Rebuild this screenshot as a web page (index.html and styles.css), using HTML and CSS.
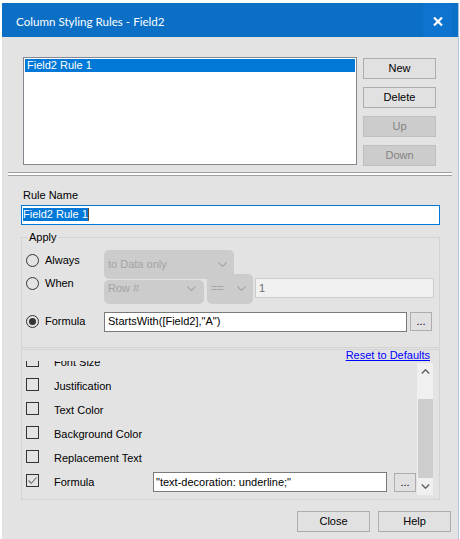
FILE: index.html
```html
<!DOCTYPE html>
<html>
<head>
<meta charset="utf-8">
<title>Column Styling Rules - Field2</title>
<link rel="stylesheet" href="styles.css">
</head>
<body>
<div class="window">
  <div class="titlebar">
    <span class="title">Column Styling Rules - Field2</span>
    <span class="close"><svg width="10" height="9" viewBox="0 0 10 9"><path d="M1 0.5 L9 8.5 M9 0.5 L1 8.5" stroke="#fff" stroke-width="2.2" fill="none"/></svg></span>
  </div>
  <div class="client">
    <div class="top">
      <div class="listbox"><div class="item selected">Field2 Rule 1</div></div>
      <div class="btncol">
        <button class="btn">New</button>
        <button class="btn">Delete</button>
        <button class="btn disabled">Up</button>
        <button class="btn disabled">Down</button>
      </div>
    </div>
    <div class="sep"></div>
    <div class="rn-label">Rule Name</div>
    <div class="rn-box"><span class="sel">Field2 Rule 1</span><span class="caret"></span></div>
    <div class="group">
      <div class="group-title">Apply</div>
      <div class="arow arow1">
        <div class="opt"><span class="radio"></span><span class="optlbl">Always</span></div>
        <div class="combo c-data"><span>to Data only</span><svg class="chev" width="9" height="5" viewBox="0 0 9 5"><path d="M0.5 0.5 L4.5 4.5 L8.5 0.5" stroke="#a8a8a8" stroke-width="1.2" fill="none"/></svg></div>
      </div>
      <div class="arow arow2">
        <div class="opt"><span class="radio"></span><span class="optlbl">When</span></div>
        <div class="combo c-row"><span>Row #</span><svg class="chev" width="9" height="5" viewBox="0 0 9 5"><path d="M0.5 0.5 L4.5 4.5 L8.5 0.5" stroke="#a8a8a8" stroke-width="1.2" fill="none"/></svg></div>
        <div class="combo c-op"><span>==</span><svg class="chev" width="9" height="5" viewBox="0 0 9 5"><path d="M0.5 0.5 L4.5 4.5 L8.5 0.5" stroke="#a8a8a8" stroke-width="1.2" fill="none"/></svg></div>
        <div class="tb-dis">1</div>
      </div>
      <div class="arow arow3">
        <div class="opt"><span class="radio checked"></span><span class="optlbl">Formula</span></div>
        <div class="tb-formula">StartsWith([Field2],"A")</div>
        <button class="btn ell">...</button>
      </div>
    </div>
    <div class="panel">
      <div class="linkrow"><a href="#" class="link">Reset to Defaults</a></div>
      <div class="scrollarea">
        <div class="viewport">
          <div class="rows">
            <div class="crow"><span class="cb"></span><span class="clabel">Font Size</span></div>
            <div class="crow"><span class="cb"></span><span class="clabel">Justification</span></div>
            <div class="crow"><span class="cb"></span><span class="clabel">Text Color</span></div>
            <div class="crow"><span class="cb"></span><span class="clabel">Background Color</span></div>
            <div class="crow"><span class="cb"></span><span class="clabel">Replacement Text</span></div>
            <div class="crow">
              <span class="cb"><svg width="11" height="11" viewBox="0 0 11 11"><path d="M1.5 5.5 L4.3 8.3 L9.5 2.5" stroke="#6a6a6a" stroke-width="1.1" fill="none"/></svg></span>
              <span class="clabel wide">Formula</span>
              <div class="tb-small">"text-decoration: underline;"</div>
              <button class="btn ell2">...</button>
            </div>
          </div>
        </div>
        <div class="scrollbar">
          <div class="sb-btn"><svg width="9" height="5" viewBox="0 0 9 5"><path d="M0.8 4.5 L4.5 0.8 L8.2 4.5" stroke="#606060" stroke-width="1.4" fill="none"/></svg></div>
          <div class="sb-track"><div class="sb-thumb"></div></div>
          <div class="sb-btn"><svg width="9" height="5" viewBox="0 0 9 5"><path d="M0.8 0.5 L4.5 4.2 L8.2 0.5" stroke="#606060" stroke-width="1.4" fill="none"/></svg></div>
        </div>
      </div>
    </div>
    <div class="footer">
      <button class="btn">Close</button>
      <button class="btn">Help</button>
    </div>
  </div>
</div>
</body>
</html>
```
FILE: styles.css
```css
* { box-sizing: border-box; }
html, body { margin: 0; padding: 0; background: #ffffff; }
body {
  font-family: "Liberation Sans", Arial, sans-serif;
  font-size: 11px;
  line-height: 13px;
  color: #000;
}
.window {
  margin: 3px 0 0 2px;
  width: 457px;
  height: 536px;
  background: #e3e3e3;
  border-right: 1px solid #a9c3e6;
  display: flex;
  flex-direction: column;
}
.titlebar {
  flex: none;
  height: 34px;
  background: #0b6fc6;
  display: flex;
  align-items: center;
}
.title {
  font-family: Lato, "Noto Sans", sans-serif;
  font-size: 11.6px;
  color: #fff;
  margin-left: 14px;
  padding-top: 2px;
}
.close {
  margin-left: auto;
  margin-right: 6px;
  width: 29px;
  height: 34px;
  display: flex;
  align-items: center;
  justify-content: center;
  padding-top: 2px;
  background: #0d73cf;
}
.client { flex: 1; }

.top {
  display: flex;
  align-items: flex-start;
  margin: 20px 0 0 21px;
}
.listbox {
  width: 334px;
  height: 108px;
  background: #fff;
  border: 1px solid #828790;
  padding: 1px;
}
.item { height: 13px; line-height: 13px; padding-left: 2px; }
.item.selected { background: #0078d7; color: #fff; }
.btncol {
  margin: 1px 0 0 6px;
  display: flex;
  flex-direction: column;
  gap: 8px;
}
.btn {
  font-family: "Liberation Sans", Arial, sans-serif;
  font-size: 11px;
  line-height: 13px;
  width: 73px;
  height: 21px;
  background: #e1e1e1;
  border: 1px solid #adadad;
  padding: 0;
  color: #000;
}
.btn.disabled {
  background: #cccccc;
  border-color: #bfbfbf;
  color: #838383;
}
.sep {
  margin: 6px 0 0 6px;
  width: 444px;
  height: 4px;
  border-top: 1px solid #a0a0a0;
  border-bottom: 1px solid #a0a0a0;
  background: #fbfbfb;
}
.rn-label { margin: 13px 0 0 21px; }
.rn-box {
  margin: 3px 0 0 19px;
  width: 419px;
  height: 20px;
  border: 1px solid #0078d7;
  background: #fff;
  padding: 2px 0 0 1px;
  display: flex;
  align-items: flex-start;
}
.sel { background: #0078d7; color: #fff; height: 13px; }
.caret { width: 1px; height: 13px; background: #6b4a1f; }

.group {
  margin: 12px 0 0 19px;
  width: 419px;
  border: 1px solid #d3d3d3;
  padding-bottom: 15px;
}
.group-title {
  margin: -7px 0 0 6px;
  padding: 0 1px;
  background: #e3e3e3;
  width: fit-content;
  height: 13px;
}
.arow { display: flex; align-items: flex-start; }
.arow1 { margin-top: 6px; height: 30px; }
.arow2 { height: 24px; }
.arow3 { margin-top: 8px; height: 20px; }
.opt {
  flex: none;
  width: 82px;
  display: flex;
  align-items: flex-start;
  padding-left: 4px;
}
.arow1 .opt { margin-top: 4px; }
.arow2 .opt { margin-top: -3px; }
.arow3 .opt { margin-top: 3px; }
.radio {
  flex: none;
  width: 13px;
  height: 13px;
  border: 1px solid #333;
  border-radius: 50%;
  margin-right: 6px;
  display: flex;
  align-items: center;
  justify-content: center;
}
.radio.checked::after {
  content: "";
  width: 7px;
  height: 7px;
  border-radius: 50%;
  background: #333;
}
.combo {
  flex: none;
  background: #cccccc;
  border-radius: 5px;
  color: #a3a3a3;
  display: flex;
  justify-content: space-between;
  align-items: flex-start;
  padding: 0 7px 0 4px;
}
.chev { margin-top: 4px; }
.c-data { width: 130px; height: 29px; padding-top: 8px; }
.c-row { width: 100px; height: 24px; padding-top: 2px; padding-right: 8px; }
.c-op { width: 46px; height: 30px; margin: -6px 0 0 3px; padding-top: 8px; }
.tb-dis {
  flex: none;
  width: 179px;
  height: 20px;
  margin: -2px 0 0 2px;
  background: #f0f0f0;
  border: 1px solid #cccccc;
  color: #6d6d6d;
  padding: 3px 0 0 3px;
}
.tb-formula {
  flex: none;
  width: 303px;
  height: 20px;
  background: #fff;
  border: 1px solid #7a7a7a;
  padding: 2px 0 0 3px;
}
.btn.ell { width: 22px; height: 19px; margin-left: 3px; }

.panel {
  margin: 1px 0 0 19px;
  width: 419px;
  border: 1px solid #d3d3d3;
  padding-bottom: 2px;
}
.linkrow {
  height: 11px;
  line-height: 11px;
  text-align: right;
  padding-right: 9px;
}
.link { color: #0000ff; text-decoration: underline; }
.scrollarea { display: flex; height: 136px; }
.viewport { flex: 1; overflow: hidden; }
.rows { margin-top: -10px; }
.crow { height: 24px; display: flex; align-items: flex-start; }
.cb {
  flex: none;
  width: 13px;
  height: 13px;
  border: 1px solid #333;
  margin: 3px 15px 0 4px;
  display: flex;
}
.clabel { margin-top: 5px; }
.clabel.wide { flex: none; width: 99px; }
.tb-small {
  flex: none;
  width: 234px;
  height: 20px;
  margin-top: 1px;
  border: 1px solid #7a7a7a;
  background: #fff;
  padding: 3px 0 0 2px;
}
.btn.ell2 { width: 22px; height: 19px; margin: 2px 0 0 7px; }
.scrollbar {
  flex: none;
  width: 16px;
  height: 132px;
  margin: 2px 6px 0 0;
  background: #f0f0f0;
  display: flex;
  flex-direction: column;
}
.sb-btn {
  height: 17px;
  display: flex;
  align-items: center;
  justify-content: center;
}
.sb-track { flex: 1; }
.sb-thumb {
  margin: 19px 0 0 1px;
  height: 79px;
  background: #cdcdcd;
}
.footer {
  display: flex;
  justify-content: flex-end;
  gap: 8px;
  margin-top: 11px;
  padding-right: 7px;
}
```
